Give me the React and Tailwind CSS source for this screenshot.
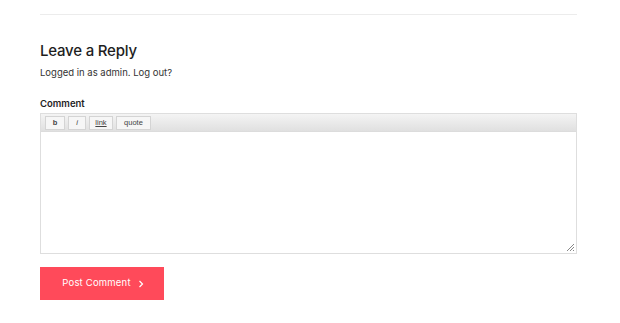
export default function App() {
  return (
    <div className="w-[620px] h-[323px] bg-white font-['Inter',sans-serif] text-[#1e1e1e]">
      <div className="mx-[40px] w-[537px] pt-[14px]">
        <div className="h-px bg-[#ececec]" />
        <h3 className="mt-[26px] text-[15px] font-medium leading-[20px] tracking-[-0.2px]">Leave a Reply</h3>
        <p className="mt-[6px] text-[9.5px] leading-[12px] text-[#333]">
          Logged in as admin. <span>Log out?</span>
        </p>
        <label className="block mt-[19px] text-[9.5px] font-semibold leading-[12px]">Comment</label>
        <div className="mt-[3px] border border-[#dedede]">
          <div className="h-[18px] bg-gradient-to-b from-[#f4f4f4] to-[#e0e0e0] border-b border-[#dcdcdc] flex items-center gap-[3px] pl-[4px] font-['Liberation_Sans',sans-serif] text-[7.5px] text-[#444]">
            <span className="h-[14px] w-[20px] flex items-center justify-center border border-[#d4d4d4] bg-[#f6f6f6] font-bold">b</span>
            <span className="h-[14px] w-[18px] flex items-center justify-center border border-[#d4d4d4] bg-[#f6f6f6] italic">i</span>
            <span className="h-[14px] w-[24px] flex items-center justify-center border border-[#d4d4d4] bg-[#f6f6f6] underline">link</span>
            <span className="h-[14px] w-[35px] flex items-center justify-center border border-[#d4d4d4] bg-[#f6f6f6]">quote</span>
          </div>
          <div className="relative h-[121px] bg-white">
            <svg className="absolute right-[1px] bottom-[1px]" width="9" height="9" viewBox="0 0 9 9">
              <path d="M8 1L1 8M8 4L4 8M8 7L7 8" stroke="#888" strokeWidth="1" />
            </svg>
          </div>
        </div>
        <button className="mt-[13px] w-[124px] h-[33px] bg-[#ff4a5a] text-white text-[9.5px] font-normal tracking-[0.2px] flex items-center justify-center gap-[7px] pl-[2px]">
          Post Comment
          <svg width="6" height="8" viewBox="0 0 6 8">
            <path d="M1.5 1L4.5 4L1.5 7" stroke="white" strokeWidth="1.2" fill="none" />
          </svg>
        </button>
      </div>
    </div>
  );
}
